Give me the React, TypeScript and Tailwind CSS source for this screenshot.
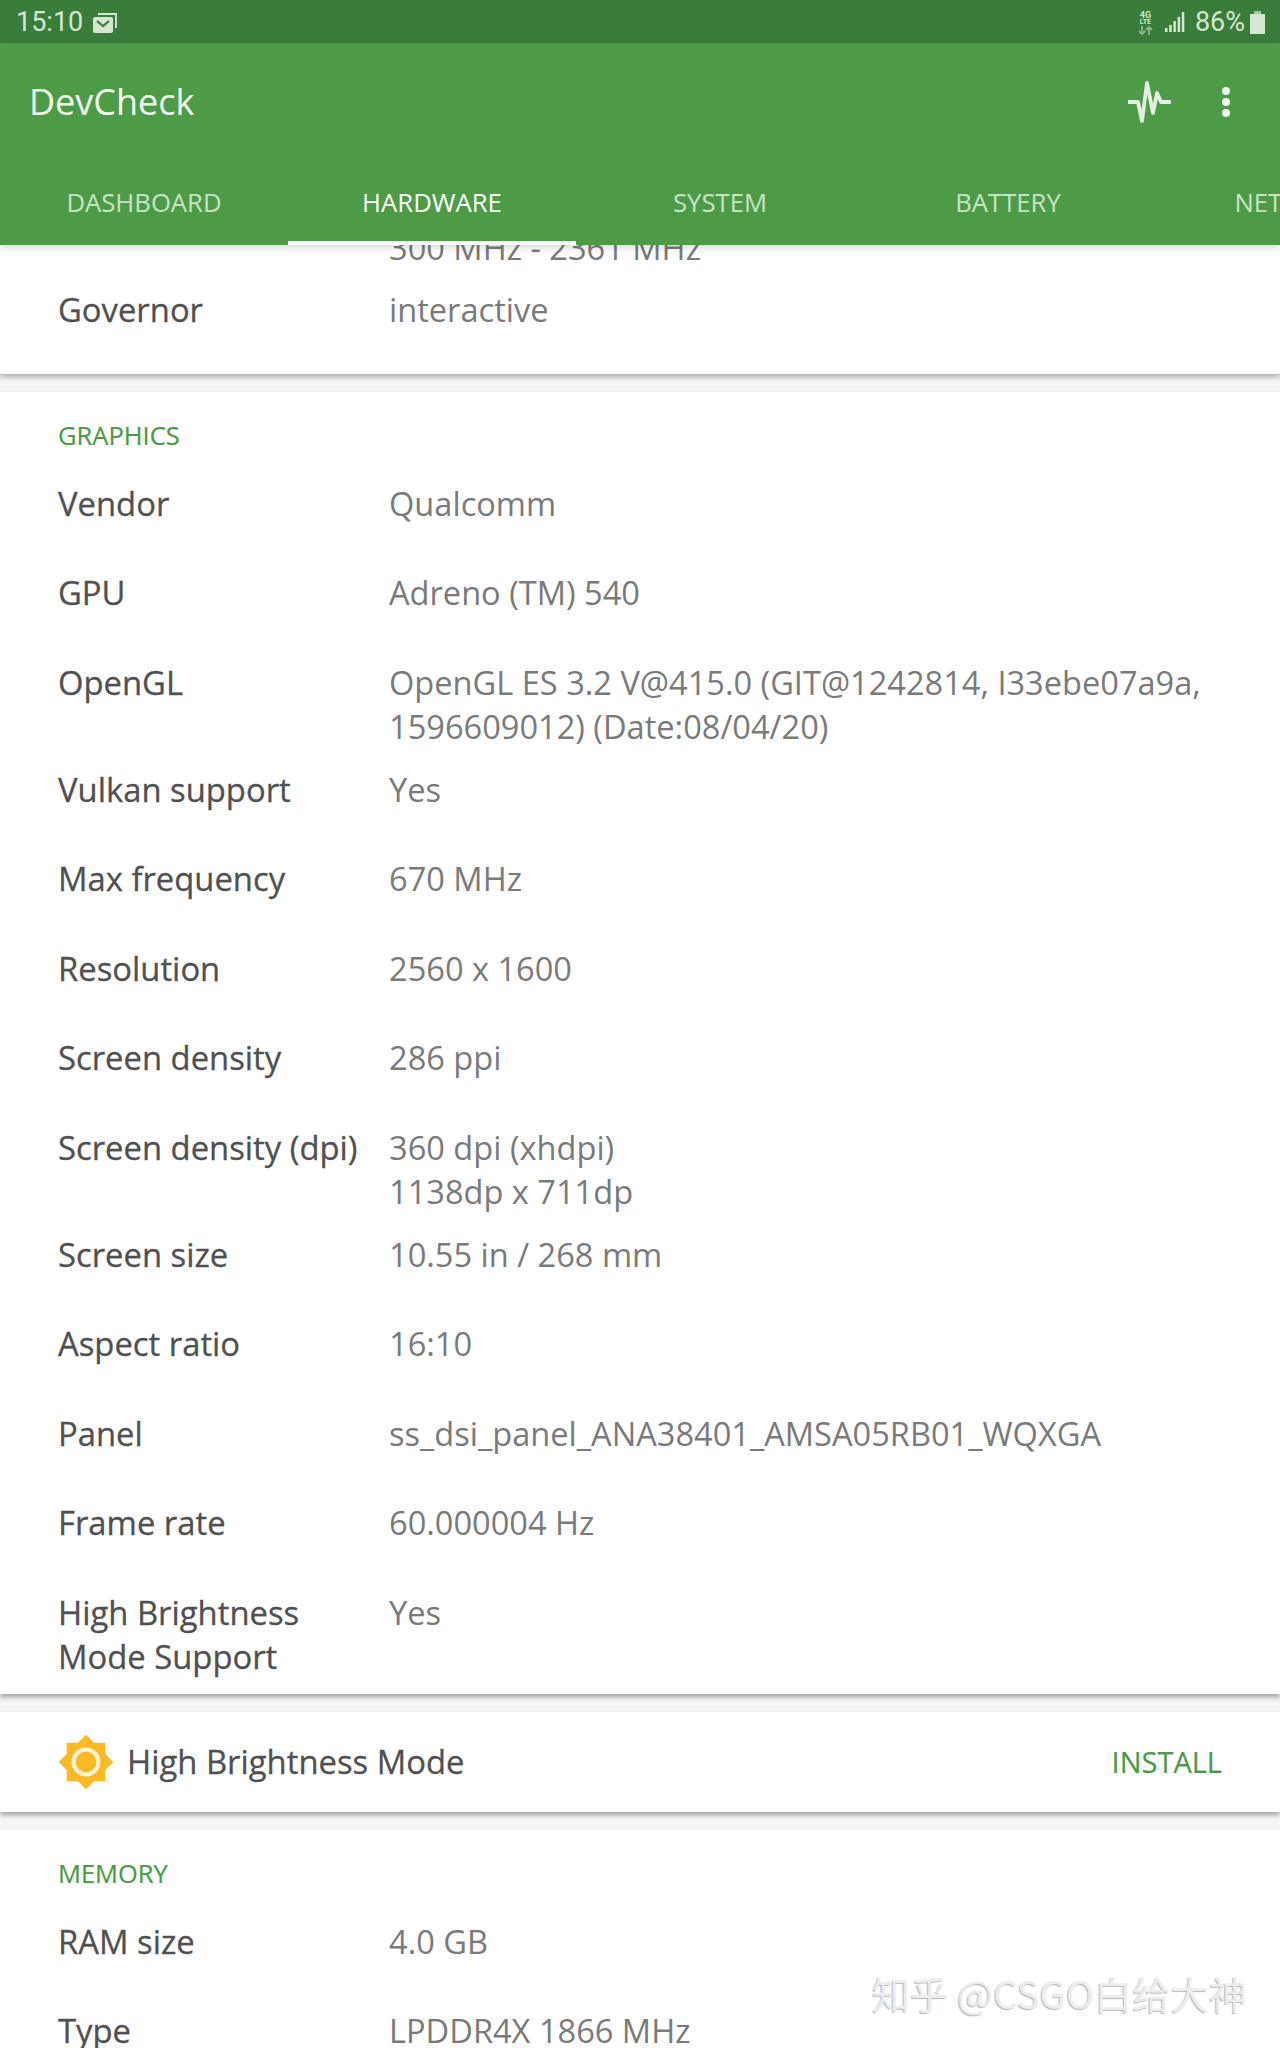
import React from "react";

const FONT = "font-['Open_Sans','Noto_Sans',sans-serif]";

function Row({
  label,
  value,
  className = "min-h-[89.5px] pb-[17.5px]",
}: {
  label?: React.ReactNode;
  value: React.ReactNode;
  className?: string;
}) {
  return (
    <div className={"flex pl-[58px] pr-[58px] text-[32.6px] leading-[44.7px] " + className}>
      <div className="w-[331px] shrink-0 text-[32.8px] font-medium text-[#505050] [-webkit-text-stroke:0.3px_#505050]">{label}</div>
      <div className="flex-1 text-[#7a7a7a]">{value}</div>
    </div>
  );
}

function Heading({ children }: { children: React.ReactNode }) {
  return (
    <div className="px-[58px] pb-[29px] pt-[25px] text-[25.5px] leading-[36px] text-[#4c9a47] [-webkit-text-stroke:0.2px_#4c9a47]">
      {children}
    </div>
  );
}

function Tab({ label, active }: { label: string; active?: boolean }) {
  return (
    <div
      className={
        "relative flex h-[100px] w-[288px] shrink-0 items-center justify-center pt-[16px] text-[25.7px] " +
        (active ? "text-white" : "text-[#c9e3c6]")
      }
    >
      {label}
      {active && <div className="absolute bottom-0 left-0 h-[4px] w-full bg-white" />}
    </div>
  );
}

export default function App() {
  return (
    <div className={"relative flex h-[2048px] w-[1280px] flex-col overflow-hidden bg-[#f6f6f6] " + FONT}>
      {/* status bar */}
      <div className="flex h-[43px] shrink-0 items-center justify-between bg-[#3a7d3b] pl-[16px] pr-[15px] pt-[2px] text-[#d5e6d3]">
        <div className="flex items-center gap-[10px]">
          <span className="font-['Roboto',sans-serif] text-[27px] leading-none">15:10</span>
          <svg width="24" height="20" viewBox="0 0 24 20">
            <path d="M5 1h18v14" fill="none" stroke="#d5e6d3" strokeWidth="1.800" />
            <rect x="0" y="4" width="20" height="16" rx="2" fill="#d5e6d3" />
            <path d="M4 8l6 5 6-5" fill="none" stroke="#3a7d3b" strokeWidth="2.200" />
          </svg>
        </div>
        <div className="flex items-center">
          <div className="mr-[12px] flex w-[15px] flex-col items-center font-['Roboto',sans-serif] font-bold leading-none">
            <span className="text-[9px] leading-[8px]">4G</span>
            <span className="text-[7px] leading-[6px]">LTE</span>
            <svg width="15" height="9" viewBox="0 0 15 9" className="mt-[1px]">
              <path d="M4 0v8M1 5l3 3 3-3M11 9V1M8 4l3-3 3 3" fill="none" stroke="#8fb58e" strokeWidth="1.800" />
            </svg>
          </div>
          <svg width="20" height="21" viewBox="0 0 20 21" className="mr-[10px]">
            <rect x="0" y="16" width="2.500" height="4" fill="#d5e6d3" />
            <rect x="4.200" y="13" width="2.500" height="7" fill="#d5e6d3" />
            <rect x="8.400" y="9" width="2.500" height="11" fill="#d5e6d3" />
            <rect x="12.600" y="5" width="2.500" height="15" fill="#d5e6d3" />
            <rect x="16.800" y="0" width="2.500" height="20" fill="#d5e6d3" />
          </svg>
          <span className="font-['Roboto',sans-serif] text-[27px] leading-none">86%</span>
          <svg width="15" height="23" viewBox="0 0 15 23" className="ml-[5px]">
            <rect x="4" y="0" width="7" height="3" fill="#a9c9a7" />
            <rect x="0" y="3" width="15" height="20" fill="#d5e6d3" />
          </svg>
        </div>
      </div>

      {/* app bar and tabs */}
      <div className="relative z-10 flex h-[202px] shrink-0 flex-col overflow-hidden bg-[#4e9b47] shadow-[0_3px_8px_rgba(0,0,0,0.14)]">
        <div className="flex h-[102px] shrink-0 items-center justify-between pl-[29px] pr-[50px] pt-[16px]">
          <span className="text-[36px] text-[#f1f8f0]">DevCheck</span>
          <div className="flex items-center gap-[51px]">
            <svg width="43" height="43" viewBox="0 0 43 43" fill="none" stroke="#e3f0e1" strokeWidth="3.800" strokeLinejoin="round" strokeLinecap="round">
              <path d="M1 21h9l4 19 5-38 6 30 4-20 4 9h9" />
            </svg>
            <div className="flex flex-col gap-[3px]">
              <div className="h-[8px] w-[8px] rounded-full bg-[#eef6ed]" />
              <div className="h-[8px] w-[8px] rounded-full bg-[#eef6ed]" />
              <div className="h-[8px] w-[8px] rounded-full bg-[#eef6ed]" />
            </div>
          </div>
        </div>
        <div className="flex">
          <Tab label="DASHBOARD" />
          <Tab label="HARDWARE" active />
          <Tab label="SYSTEM" />
          <Tab label="BATTERY" />
          <Tab label="NETWORK" />
        </div>
      </div>

      {/* scrolled list, first row is cut by the app bar */}
      <div className="flex min-h-0 flex-1 flex-col gap-[18px] overflow-hidden">
        <div className="-mt-[19px] bg-white shadow-[0_3px_5px_rgba(0,0,0,0.3)]">
          <Row value="300 MHz - 2361 MHz" className="pb-[17px]" />
          <Row label="Governor" value="interactive" className="h-[86px]" />
        </div>

        <div className="bg-white shadow-[0_3px_5px_rgba(0,0,0,0.35)]">
          <Heading>GRAPHICS</Heading>
          <Row label="Vendor" value="Qualcomm" />
          <Row label="GPU" value="Adreno (TM) 540" />
          <Row label="OpenGL" value="OpenGL ES 3.2 V@415.0 (GIT@1242814, I33ebe07a9a, 1596609012) (Date:08/04/20)" />
          <Row label="Vulkan support" value="Yes" />
          <Row label="Max frequency" value="670 MHz" />
          <Row label="Resolution" value="2560 x 1600" />
          <Row label="Screen density" value="286 ppi" />
          <Row
            label="Screen density (dpi)"
            value={
              <>
                360 dpi (xhdpi)
                <br />
                1138dp x 711dp
              </>
            }
          />
          <Row label="Screen size" value="10.55 in / 268 mm" />
          <Row label="Aspect ratio" value="16:10" />
          <Row label="Panel" value="ss_dsi_panel_ANA38401_AMSA05RB01_WQXGA" />
          <Row label="Frame rate" value="60.000004 Hz" />
          <Row
            className="pb-[14px]"
            label={
              <>
                High Brightness
                <br />
                Mode Support
              </>
            }
            value="Yes"
          />
        </div>

        <div className="flex h-[100px] shrink-0 items-center justify-between bg-white pl-[58px] pr-[58px] shadow-[0_3px_5px_rgba(0,0,0,0.35)]">
          <div className="flex items-center gap-[12px]">
            <svg width="58" height="58" viewBox="0 0 24 24" className="-ml-[1px]">
              <path d="M20 8.690V4h-4.690L12 .690 8.690 4H4v4.690L.690 12 4 15.310V20h4.690L12 23.310 15.310 20H20v-4.690L23.310 12 20 8.690z" fill="#fbb924" />
              <circle cx="12" cy="12" r="6" fill="#fff4d8" />
              <circle cx="12" cy="12" r="4.300" fill="#fbb924" />
            </svg>
            <span className="text-[32.8px] font-medium text-[#505050] [-webkit-text-stroke:0.3px_#505050]">High Brightness Mode</span>
          </div>
          <span className="text-[29px] text-[#4c9a47] [-webkit-text-stroke:0.2px_#4c9a47]">INSTALL</span>
        </div>

        <div className="flex-1 bg-white">
          <Heading>MEMORY</Heading>
          <Row label="RAM size" value="4.0 GB" />
          <Row label="Type" value="LPDDR4X 1866 MHz" />
        </div>
      </div>

      {/* watermark */}
      <div className="absolute left-[872px] top-[1968px] font-['Noto_Sans_CJK_SC',sans-serif] text-[38px] leading-[50px] tracking-[0.2px] text-[#ececec] [text-shadow:-1px_1px_1px_#b5b5b5]">
        知乎 @CSGO白给大神
      </div>
    </div>
  );
}
